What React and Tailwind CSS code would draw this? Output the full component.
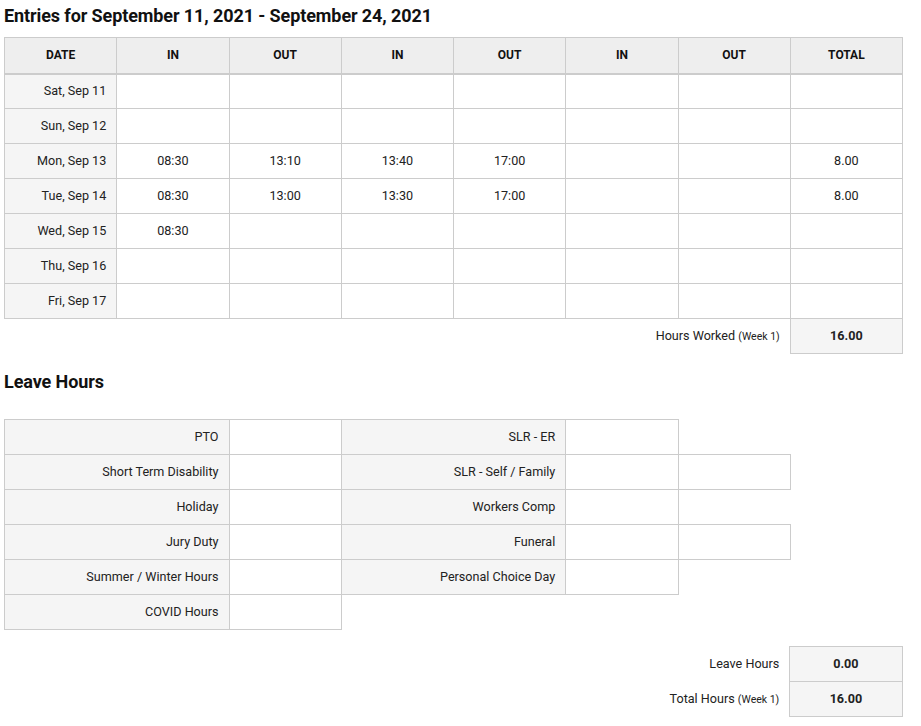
const days = [
    { date: 'Sat, Sep 11', times: ['', '', '', '', '', ''], total: '' },
    { date: 'Sun, Sep 12', times: ['', '', '', '', '', ''], total: '' },
    { date: 'Mon, Sep 13', times: ['08:30', '13:10', '13:40', '17:00', '', ''], total: '8.00' },
    { date: 'Tue, Sep 14', times: ['08:30', '13:00', '13:30', '17:00', '', ''], total: '8.00' },
    { date: 'Wed, Sep 15', times: ['08:30', '', '', '', '', ''], total: '' },
    { date: 'Thu, Sep 16', times: ['', '', '', '', '', ''], total: '' },
    { date: 'Fri, Sep 17', times: ['', '', '', '', '', ''], total: '' },
];

const headers = ['Date', 'In', 'Out', 'In', 'Out', 'In', 'Out', 'Total'];

// [left label, right label, extra empty cell]
const leaveRows = [
    ['PTO', 'SLR - ER', false],
    ['Short Term Disability', 'SLR - Self / Family', true],
    ['Holiday', 'Workers Comp', false],
    ['Jury Duty', 'Funeral', true],
    ['Summer / Winter Hours', 'Personal Choice Day', false],
    ['COVID Hours', null, false],
];

const Cols = () => (
    <colgroup>
        {headers.map((_, i) => (
            <col key={i} className="w-[112.25px]" />
        ))}
    </colgroup>
);

const cell = 'border border-[#cccccc] h-[35px] p-0';
const labelCell = `${cell} bg-[#f5f5f5] text-right pr-[10px]`;

export default function App() {
    return (
        <div className="px-[4px] pt-[4px] pb-[10px] text-[12.6px] text-[#222222] bg-white min-h-screen" style={{ fontFamily: 'Roboto, "Liberation Sans", sans-serif' }}>
            <h1 className="text-[18px] leading-[24px] font-bold text-[#111111] tracking-[-0.1px]">
                Entries for September 11, 2021 - September 24, 2021
            </h1>

            {/* Time entries */}
            <table className="mt-[9px] w-[898px] table-fixed border-collapse">
                <Cols />
                <thead>
                    <tr>
                        {headers.map((h, i) => (
                            <th
                                key={i}
                                className="border border-[#cccccc] border-b-2 bg-[#eeeeee] h-[36px] p-0 text-[12px] font-bold uppercase text-[#111111] text-center"
                            >
                                {h}
                            </th>
                        ))}
                    </tr>
                </thead>
                <tbody>
                    {days.map((d) => (
                        <tr key={d.date}>
                            <td className={labelCell}>{d.date}</td>
                            {d.times.map((t, i) => (
                                <td key={i} className={`${cell} text-center`}>{t}</td>
                            ))}
                            <td className={`${cell} text-center`}>{d.total}</td>
                        </tr>
                    ))}
                    <tr>
                        <td colSpan="7" className="h-[35px] p-0 pr-[10px] text-right">
                            Hours Worked <span className="text-[10.5px]">(Week 1)</span>
                        </td>
                        <td className={`${cell} bg-[#f5f5f5] text-center font-bold`}>16.00</td>
                    </tr>
                </tbody>
            </table>

            <h2 className="mt-[16px] text-[18px] leading-[24px] font-bold text-[#111111] tracking-[-0.1px]">Leave Hours</h2>

            {/* Leave types */}
            <table className="mt-[25px] w-[898px] table-fixed border-collapse">
                <Cols />
                <tbody>
                    {leaveRows.map(([left, right, extra]) => (
                        <tr key={left}>
                            <td colSpan="2" className={labelCell}>{left}</td>
                            <td className={cell}></td>
                            {right && (
                                <>
                                    <td colSpan="2" className={labelCell}>{right}</td>
                                    <td className={cell}></td>
                                </>
                            )}
                            {extra && <td className={cell}></td>}
                        </tr>
                    ))}
                </tbody>
            </table>

            {/* Totals */}
            <table className="mt-[16px] w-[898px] table-fixed border-collapse">
                <Cols />
                <tbody>
                    <tr>
                        <td colSpan="7" className="h-[35px] p-0 pr-[10px] text-right">Leave Hours</td>
                        <td className={`${cell} bg-[#f5f5f5] text-center font-bold`}>0.00</td>
                    </tr>
                    <tr>
                        <td colSpan="7" className="h-[35px] p-0 pr-[10px] text-right">
                            Total Hours <span className="text-[10.5px]">(Week 1)</span>
                        </td>
                        <td className={`${cell} bg-[#f5f5f5] text-center font-bold`}>16.00</td>
                    </tr>
                </tbody>
            </table>
        </div>
    );
}
